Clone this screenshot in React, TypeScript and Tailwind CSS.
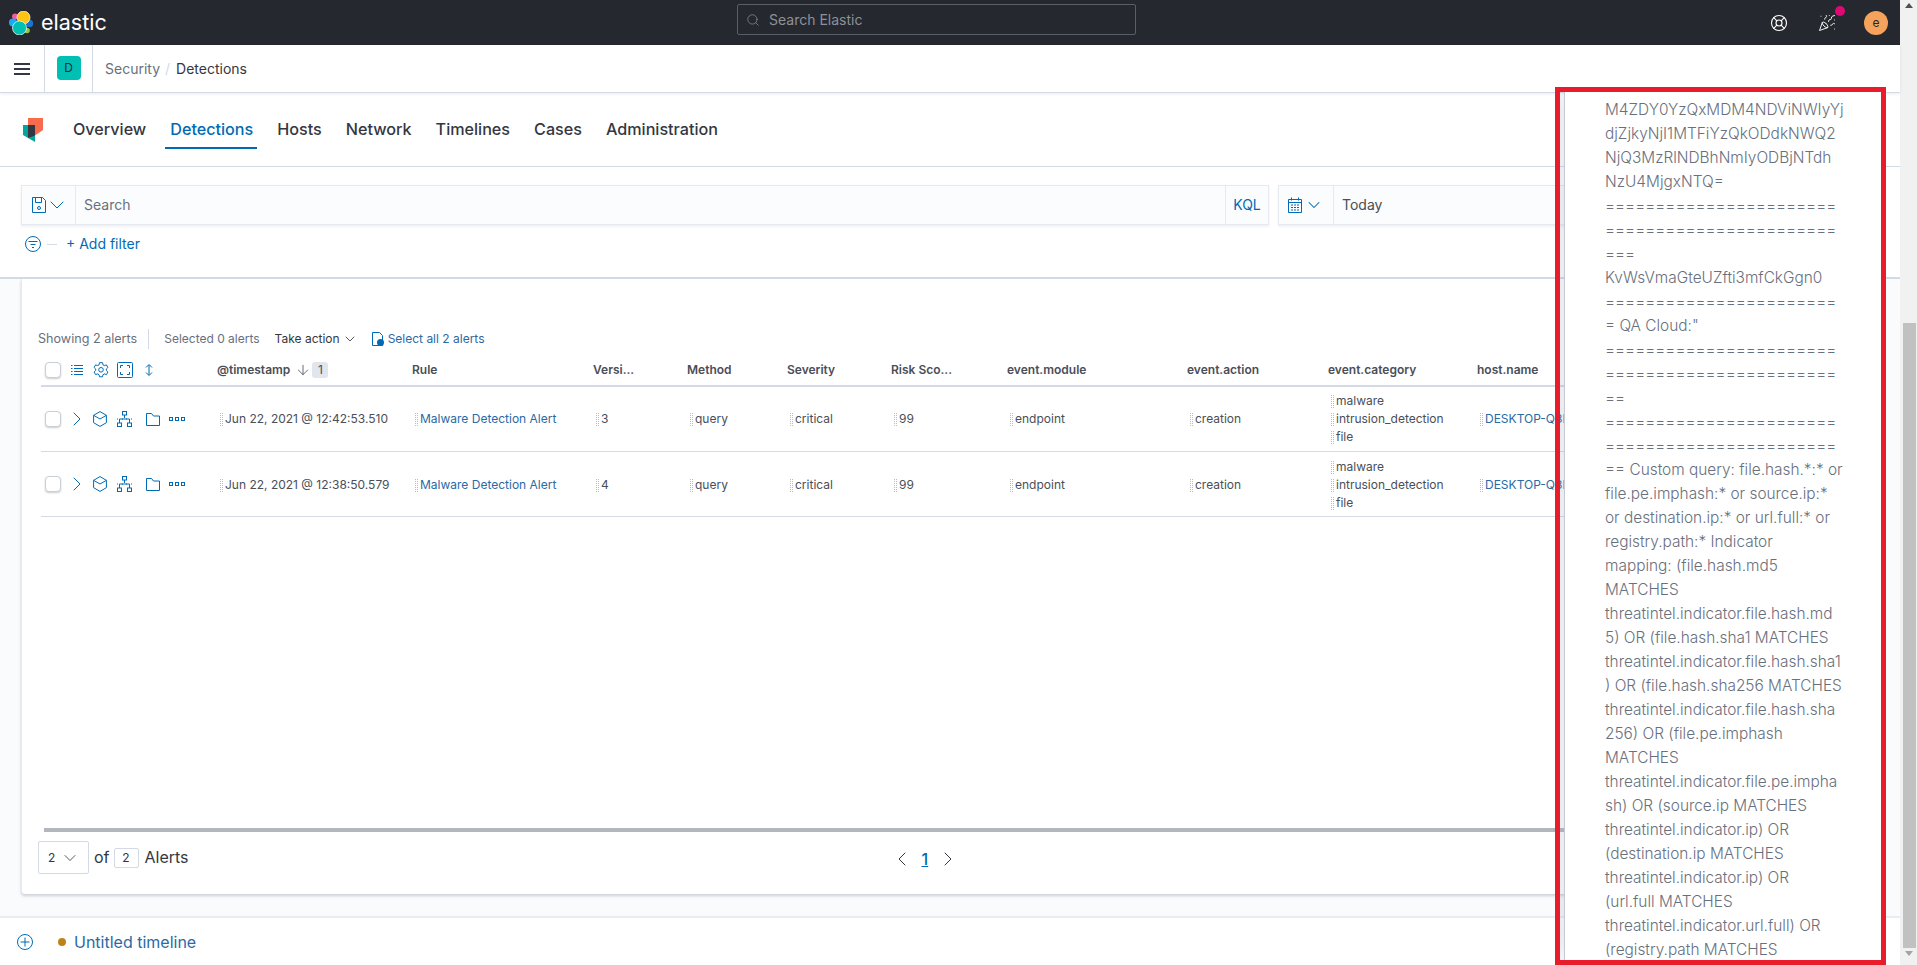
import React from 'react';
import { ChevronDown, ChevronLeft, ChevronRight, LifeBuoy, PartyPopper, Search, ArrowDown } from 'lucide-react';

const eq = '=======================';

const tooltipLines = [
  'M4ZDY0YzQxMDM4NDViNWIyYj',
  'djZjkyNjI1MTFiYzQkODdkNWQ2',
  'NjQ3MzRlNDBhNmIyODBjNTdh',
  'NzU4MjgxNTQ=',
  eq,
  eq,
  '===',
  'KvWsVmaGteUZfti3mfCkGgn0',
  eq,
  '= QA Cloud:"',
  eq,
  eq,
  '==',
  eq,
  eq,
  '== Custom query: file.hash.*:* or',
  'file.pe.imphash:* or source.ip:*',
  'or destination.ip:* or url.full:* or',
  'registry.path:* Indicator',
  'mapping: (file.hash.md5',
  'MATCHES',
  'threatintel.indicator.file.hash.md',
  '5) OR (file.hash.sha1 MATCHES',
  'threatintel.indicator.file.hash.sha1',
  ') OR (file.hash.sha256 MATCHES',
  'threatintel.indicator.file.hash.sha',
  '256) OR (file.pe.imphash',
  'MATCHES',
  'threatintel.indicator.file.pe.impha',
  'sh) OR (source.ip MATCHES',
  'threatintel.indicator.ip) OR',
  '(destination.ip MATCHES',
  'threatintel.indicator.ip) OR',
  '(url.full MATCHES',
  'threatintel.indicator.url.full) OR',
  '(registry.path MATCHES',
];

const alerts = [
  { time: 'Jun 22, 2021 @ 12:42:53.510', version: '3' },
  { time: 'Jun 22, 2021 @ 12:38:50.579', version: '4' },
];

const gridCols = 'grid grid-cols-[176px_195px_181px_94px_100px_104px_116px_180px_141px_149px_120px]';

function Grip() {
  return <span className="w-[3px] h-[13px] shrink-0 border-x border-dotted border-[#b8bcc6]" />;
}

function Cell({ children, link }: { children: React.ReactNode; link?: boolean }) {
  return (
    <div className={`flex items-center gap-[2px] pl-[3px] whitespace-nowrap overflow-hidden ${link ? 'text-[#2a6aa5]' : 'text-[#4a4e58]'}`}>
      <Grip />
      <span>{children}</span>
    </div>
  );
}

function Checkbox() {
  return <span className="w-4 h-4 shrink-0 rounded-[4px] bg-white border border-[#c9cfd9] shadow-[0_1px_2px_rgba(0,0,0,0.2)]" />;
}

function ElasticLogo() {
  return (
    <svg viewBox="0 0 24 24" className="w-6 h-6">
      <circle cx="6" cy="5.5" r="3" fill="#ef5ba1" />
      <circle cx="4" cy="11.5" r="4" fill="#1ba9f5" />
      <circle cx="20.5" cy="12.5" r="3.8" fill="#1b75d0" />
      <circle cx="18" cy="19.5" r="2.8" fill="#90c93f" />
      <circle cx="14.5" cy="6.5" r="6.5" fill="#fec514" stroke="#fff" strokeWidth="0.7" />
      <circle cx="10.5" cy="17" r="7" fill="#00bfb3" stroke="#fff" strokeWidth="0.7" />
    </svg>
  );
}

function SecurityLogo() {
  return (
    <svg viewBox="0 0 20 25" className="w-5 h-[25px]">
      <path d="M5 1h15v12l-8 5.5V8H5z" fill="#f86b4c" />
      <path d="M0 8h12v17L0 18z" fill="#00a69b" />
      <path d="M5 8h7v10.500L5 21z" fill="#343741" />
    </svg>
  );
}

function SaveIcon() {
  return (
    <svg viewBox="0 0 14 16" className="w-[14px] h-4" fill="none" stroke="#006bb4">
      <path d="M.5.500h10l3 3v12H.5zM3.500.500v5h6v-5" />
      <circle cx="7" cy="11" r="1.500" />
    </svg>
  );
}

function CalendarIcon() {
  return (
    <svg viewBox="0 0 14 16" className="w-[14px] h-4" fill="none" stroke="#006bb4">
      <path d="M.5 2.500h13v13H.5zM.5 5.500h13M3.500.5v3M10.500.5v3" />
      <path d="M3 8h2M6 8h2M9 8h2M3 10.500h2M6 10.500h2M9 10.500h2M3 13h2M6 13h2M9 13h2" />
    </svg>
  );
}

function FilterIcon() {
  return (
    <svg viewBox="0 0 16 16" className="w-4 h-4" fill="none" stroke="#006bb4">
      <circle cx="8" cy="8" r="7.500" />
      <path d="M3.500 5.500h9M5.500 8.500h5M7 11.500h2" />
    </svg>
  );
}

function ListIcon() {
  return (
    <svg viewBox="0 0 12 12" className="w-3 h-3" fill="none" stroke="#006bb4">
      <path d="M0 1.500h1.500M3 1.500h9M0 4.500h1.500M3 4.500h9M0 7.500h1.500M3 7.500h9M0 10.500h1.500M3 10.500h9" />
    </svg>
  );
}

function GearIcon() {
  return (
    <svg viewBox="0 0 16 16" className="w-4 h-4" fill="none" stroke="#006bb4">
      <path d="M6.500.7h3l.5 2.200 1.300.7 2.100-.7 1.500 2.600-1.600 1.500v1.500l1.600 1.500-1.500 2.600-2.100-.7-1.300.7-.5 2.200h-3l-.5-2.200-1.300-.7-2.100.7L1.100 10l1.600-1.500V7L1.100 5.500l1.500-2.600 2.100.7L6 2.900z" />
      <circle cx="8" cy="7.800" r="2.300" />
    </svg>
  );
}

function FullscreenIcon() {
  return (
    <svg viewBox="0 0 16 16" className="w-4 h-4" fill="none" stroke="#006bb4">
      <rect x="0.5" y="0.5" width="15" height="15" rx="1" />
      <path d="M6 3.500H3.500V6M10 3.500h2.500V6M3.500 10v2.500H6M12.500 10v2.500H10" />
    </svg>
  );
}

function SortIcon() {
  return (
    <svg viewBox="0 0 8 14" className="w-2 h-[14px]" fill="none" stroke="#006bb4">
      <path d="M4 2v10M1 4.500 4 1.500l3 3M1 9.500l3 3 3-3" />
    </svg>
  );
}

function CubeIcon() {
  return (
    <svg viewBox="0 0 14 16" className="w-[14px] h-4" fill="none" stroke="#006bb4">
      <path d="M7 .6l6.400 3.700v7.400L7 15.400.6 11.700V4.300zM.6 4.300 7 8l6.400-3.700M7 8v0" />
    </svg>
  );
}

function NetworkIcon() {
  return (
    <svg viewBox="0 0 15 16" className="w-[15px] h-4" fill="none" stroke="#006bb4">
      <rect x="5.500" y="0.500" width="4" height="3.500" />
      <rect x="0.500" y="12" width="4" height="3.500" />
      <rect x="10.500" y="12" width="4" height="3.500" />
      <path d="M7.500 4v3M2.500 12V8h10v4M0 8h1M14 8h1M5 8h1M9 8h1" />
    </svg>
  );
}

function FolderIcon() {
  return (
    <svg viewBox="0 0 14 13" className="w-[14px] h-[13px]" fill="none" stroke="#006bb4">
      <path d="M.5.500h5l2 2.500h6v9.500H.5z" />
    </svg>
  );
}

function DotsIcon() {
  return (
    <svg viewBox="0 0 16 4" className="w-4 h-1" fill="none" stroke="#006bb4">
      <rect x="0.500" y="0.500" width="3" height="3" />
      <rect x="6.500" y="0.500" width="3" height="3" />
      <rect x="12.500" y="0.500" width="3" height="3" />
    </svg>
  );
}

function PlusCircleIcon() {
  return (
    <svg viewBox="0 0 16 16" className="w-4 h-4" fill="none" stroke="#006bb4">
      <circle cx="8" cy="8" r="7.500" />
      <path d="M8 3.500v9M3.500 8h9" />
    </svg>
  );
}

function FileCheckIcon() {
  return (
    <svg viewBox="0 0 12 14" className="w-3 h-[14px]">
      <path d="M.5.500h7l3 3v10H.5z" fill="none" stroke="#006bb4" />
      <circle cx="8.500" cy="10.500" r="3.500" fill="#006bb4" />
    </svg>
  );
}

function AlertRow({ time, version, last }: { time: string; version: string; last?: boolean }) {
  return (
    <div className={`${gridCols} h-[65px] border-b border-[#d3dae6] text-xs ${last ? '[&>div:not(:first-child)]:pt-[2px]' : ''}`}>
      <div className="flex items-center pl-1">
        <Checkbox />
        <ChevronRight size={24} strokeWidth={1} className="ml-1 text-[#006bb4] shrink-0" />
        <span className="ml-1"><CubeIcon /></span>
        <span className="ml-[10px]"><NetworkIcon /></span>
        <span className="ml-[14px]"><FolderIcon /></span>
        <span className="ml-[9px] flex"><DotsIcon /></span>
      </div>
      <Cell>{time}</Cell>
      <Cell link>Malware Detection Alert</Cell>
      <Cell>{version}</Cell>
      <Cell>query</Cell>
      <Cell>critical</Cell>
      <Cell>99</Cell>
      <Cell>endpoint</Cell>
      <Cell>creation</Cell>
      <div className="flex flex-col justify-center gap-0 leading-[18px] text-[#4a4e58] pl-[3px]">
        {['malware', 'intrusion_detection', 'file'].map(v => (
          <div key={v} className="flex items-center gap-[2px]">
            <Grip />
            <span>{v}</span>
          </div>
        ))}
      </div>
      <Cell link>DESKTOP-Q8IFQTK</Cell>
    </div>
  );
}

export default function App() {
  return (
    <div className="relative flex w-[1917px] h-[965px] overflow-hidden bg-white [font-family:Inter,sans-serif] text-[#343741]">
      <div className="w-[1900px] h-full flex flex-col">
        {/* Global header */}
        <header className="h-[45px] shrink-0 bg-[#25282f] flex items-center">
          <div className="w-[737px] pl-[9px] flex items-center gap-2">
            <ElasticLogo />
            <span className="text-[21.5px] leading-none text-white">elastic</span>
          </div>
          <div className="w-[399px] h-[31px] mb-[6px] border border-[#5a5e68] rounded-[2px] bg-[#25282f] flex items-center pl-2 gap-[9px] text-sm text-[#8d9098]">
            <Search size={14} strokeWidth={1.25} />
            Search Elastic
          </div>
          <div className="ml-auto flex items-center">
            <LifeBuoy size={18} strokeWidth={1.5} className="text-white" />
            <span className="relative ml-[30px]">
              <PartyPopper size={18} strokeWidth={1.25} className="text-white" />
              <span className="absolute -top-[8px] -right-[9px] w-[10px] h-[10px] rounded-full bg-[#dd0a73]" />
            </span>
            <span className="ml-[28px] mr-[12px] w-6 h-6 rounded-full bg-[#f5a35c] text-xs flex items-center justify-center text-[#25282f]">e</span>
          </div>
        </header>

        {/* Breadcrumbs */}
        <div className="h-[48px] shrink-0 flex items-center border-b border-[#d3dae6] shadow-[0_1px_3px_rgba(0,0,0,0.08)] z-10 bg-white text-sm">
          <div className="w-[44px] h-full flex items-center justify-center">
            <span className="w-4 flex flex-col gap-[3px] ml-[-1px]">
              <span className="h-[2px] bg-[#343741]" />
              <span className="h-[2px] bg-[#343741]" />
              <span className="h-[2px] bg-[#343741]" />
            </span>
          </div>
          <div className="w-[47px] h-full flex items-center justify-center border-x border-[#d3dae6] box-content">
            <span className="w-6 h-6 rounded bg-[#00bfb3] flex items-center justify-center text-[#1f2a33] text-xs -mt-[2px]">D</span>
          </div>
          <span className="ml-3 text-[#69707d]">Security</span>
          <span className="ml-[5px] mr-[6px] text-[#d3dae6]">/</span>
          <span className="text-[#343741]">Detections</span>
        </div>

        {/* App nav */}
        <nav className="h-[74px] shrink-0 flex items-center border-b border-[#d3dae6] pl-[23px] font-medium text-[16.15px]">
          <SecurityLogo />
          <div className="ml-[30px] flex gap-6">
            <span>Overview</span>
            <span className="relative text-[#006bb4]">
              Detections
              <span className="absolute -left-[5px] -right-[4px] top-[30px] h-[2px] bg-[#006bb4]" />
            </span>
            <span>Hosts</span>
            <span>Network</span>
            <span>Timelines</span>
            <span>Cases</span>
            <span>Administration</span>
          </div>
        </nav>

        {/* Query bar */}
        <div className="h-[112px] shrink-0 border-b-2 border-[#d3dae6] pl-[21px] pt-[18px] text-sm">
          <div className="flex h-[40px] gap-[9px]">
            <div className="w-[1248px] flex border border-[#e6e9f0] bg-[#fbfcfd] shadow-[0_2px_2px_rgba(152,162,179,0.15)]">
              <div className="w-[54px] flex items-center justify-center gap-[3px] border-r border-[#e6e9f0]">
                <SaveIcon />
                <ChevronDown size={24} strokeWidth={1} className="text-[#006bb4] -mx-1" />
              </div>
              <span className="flex-1 self-center pl-2 text-[#69707d]">Search</span>
              <span className="w-[43px] border-l border-[#e6e9f0] flex items-center justify-center text-[#006bb4]">KQL</span>
            </div>
            <div className="w-[500px] flex border border-[#e6e9f0] bg-[#fbfcfd] shadow-[0_2px_2px_rgba(152,162,179,0.15)]">
              <div className="w-[55px] flex items-center justify-center gap-[2px] border-r border-[#e6e9f0]">
                <CalendarIcon />
                <ChevronDown size={20} strokeWidth={1.25} className="text-[#006bb4]" />
              </div>
              <span className="self-center pl-2 text-[#4a4e58]">Today</span>
            </div>
          </div>
          <div className="flex items-center mt-[11px] pl-1 h-[16px]">
            <FilterIcon />
            <span className="ml-[6px] w-[10px] h-px bg-[#d3dae6]" />
            <span className="ml-[9px] text-[#006bb4]">+ Add filter</span>
          </div>
        </div>

        {/* Page body */}
        <main className="flex-1 min-h-0 bg-[#fafbfd] pl-[21px] pr-[20px] pb-[22px]">
          <div className="h-full flex flex-col bg-white border-l border-[#e6e9f0] rounded-b-[4px] shadow-[0_2px_3px_rgba(120,130,150,0.35)] pl-[16px] overflow-hidden">
            <div className="flex items-center h-[20px] mt-[50px] text-xs text-[#69707d] whitespace-nowrap">
              <span className="text-[12.6px]">Showing 2 alerts</span>
              <span className="ml-[11px] w-px h-[20px] bg-[#d3dae6]" />
              <span className="ml-[15px]">Selected 0 alerts</span>
              <span className="ml-[15px] text-[#343741]">Take action</span>
              <ChevronDown size={16} strokeWidth={1.25} className="ml-[2px] text-[#343741]" />
              <span className="ml-[14px]"><FileCheckIcon /></span>
              <span className="ml-[4px] text-[#2a6aa5]">Select all 2 alerts</span>
            </div>

            <div className="ml-[3px] mt-[2px] w-[1900px]">
              <div className={`${gridCols} h-[36px] pt-[4px] border-b-2 border-[#d3dae6] text-xs font-semibold text-[#4a4e58] items-center`}>
                <div className="flex items-center pl-1">
                  <Checkbox />
                  <span className="ml-[10px]"><ListIcon /></span>
                  <span className="ml-[10px]"><GearIcon /></span>
                  <span className="ml-[8px]"><FullscreenIcon /></span>
                  <span className="ml-[12px]"><SortIcon /></span>
                </div>
                <div className="flex items-center">
                  @timestamp
                  <ArrowDown size={16} strokeWidth={1.25} className="ml-[5px]" />
                  <span className="ml-[1px] w-4 h-4 rounded-[3px] bg-[#e0e5ee] flex items-center justify-center font-normal">1</span>
                </div>
                <span>Rule</span>
                <span>Versi...</span>
                <span>Method</span>
                <span>Severity</span>
                <span>Risk Sco...</span>
                <span>event.module</span>
                <span>event.action</span>
                <span>event.category</span>
                <span>host.name</span>
              </div>
              {alerts.map((a, i) => (
                <AlertRow key={a.time} time={a.time} version={a.version} last={i === 1} />
              ))}
            </div>

            <div className="flex-1" />
            <div className="ml-[6px] h-1 bg-[#b4b6bd] shrink-0" />

            <div className="h-[62px] shrink-0 pt-[9px] flex text-[#343741]">
              <div className="flex items-start">
                <div className="w-[51px] h-[33px] border border-[#d3dae6] rounded-[2px] flex items-center pl-[9px] text-xs">
                  2
                  <ChevronDown size={20} strokeWidth={1} className="ml-[5px]" />
                </div>
                <span className="ml-[5px] mt-[4px] text-base">of</span>
                <span className="ml-[4px] mt-[7px] w-[25px] h-[20px] border border-[#d3dae6] rounded-[2px] text-xs flex items-center justify-center">2</span>
                <span className="ml-[6px] mt-[4px] text-base">Alerts</span>
              </div>
              <div className="ml-[701px] flex items-center h-[33px] mt-[1px] gap-2">
                <ChevronLeft size={24} strokeWidth={1} />
                <span className="text-base text-[#006bb4] underline font-medium">1</span>
                <ChevronRight size={24} strokeWidth={1} />
              </div>
            </div>
          </div>
        </main>

        {/* Timeline bar */}
        <footer className="h-[49px] shrink-0 bg-white border-t-2 border-[#e9edf3] flex items-center pl-[17px] pt-px">
          <PlusCircleIcon />
          <span className="ml-[25px] w-[8px] h-[8px] rounded-full bg-[#bd8319]" />
          <span className="ml-[8px] text-base text-[#2a6aa5]">Untitled timeline</span>
        </footer>
      </div>

      {/* Browser scrollbar */}
      <div className="w-[17px] h-full bg-[#f1f1f1] flex flex-col items-center shrink-0">
        <span className="mt-[3px] w-0 h-0 border-x-[4px] border-x-transparent border-b-[5px] border-b-[#505050]" />
        <span className="mt-[315px] w-[13px] h-[625px] ml-[1px] bg-[#c1c1c1]" />
        <span className="mt-[3px] w-0 h-0 border-x-[4px] border-x-transparent border-t-[5px] border-t-[#a3a3a3]" />
      </div>

      {/* Highlighted tooltip */}
      <div className="absolute z-20 left-[1555px] top-[87px] w-[331px] h-[878px] border-[5px] border-[#e81c2b] overflow-hidden">
        <div className="h-full ml-[4px] border-l border-[#c5cad3] bg-white pl-[40px] pt-[6px] text-[15.4px] leading-6 text-[#69707d] font-light whitespace-pre shadow-[-12px_0_24px_rgba(150,160,180,0.25)]">
          {tooltipLines.map((line, i) => (
            <div key={i}>{line}</div>
          ))}
        </div>
      </div>
    </div>
  );
}
